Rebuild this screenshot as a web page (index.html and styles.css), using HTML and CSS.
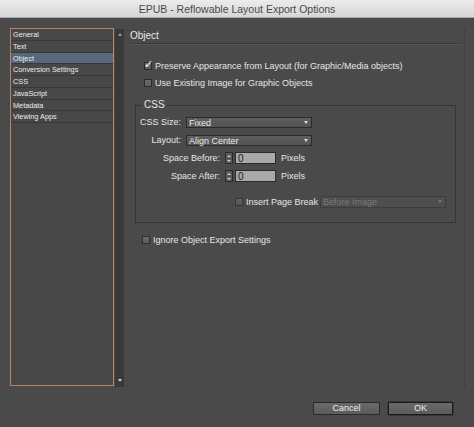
FILE: index.html
```html
<!DOCTYPE html>
<html>
<head>
<meta charset="utf-8">
<link rel="stylesheet" href="styles.css">
</head>
<body>
<div class="window">
  <div class="titlebar">EPUB - Reflowable Layout Export Options</div>
  <div class="main">
    <div class="sidebar">
      <ul class="list">
        <li>General</li>
        <li>Text</li>
        <li class="selected">Object</li>
        <li>Conversion Settings</li>
        <li>CSS</li>
        <li>JavaScript</li>
        <li>Metadata</li>
        <li>Viewing Apps</li>
      </ul>
      <div class="scrollbar">
        <span class="arrow up"></span>
        <span class="arrow down"></span>
      </div>
    </div>
    <div class="content">
      <div class="heading">Object</div>
      <div class="check-row first"><span class="checkbox checked"><span class="tick">✓</span></span><span>Preserve Appearance from Layout (for Graphic/Media objects)</span></div>
      <div class="check-row"><span class="checkbox"></span><span>Use Existing Image for Graphic Objects</span></div>
      <fieldset class="group">
        <legend>CSS</legend>
        <div class="row">
          <span class="label short">CSS Size:</span>
          <span class="select">Fixed<span class="caret"></span></span>
        </div>
        <div class="row">
          <span class="label short">Layout:</span>
          <span class="select">Align Center<span class="caret"></span></span>
        </div>
        <div class="row">
          <span class="label long">Space Before:</span>
          <span class="stepper"><span class="sa up"></span><span class="sa down"></span></span>
          <span class="input">0</span>
          <span class="unit">Pixels</span>
        </div>
        <div class="row">
          <span class="label long">Space After:</span>
          <span class="stepper"><span class="sa up"></span><span class="sa down"></span></span>
          <span class="input">0</span>
          <span class="unit">Pixels</span>
        </div>
        <div class="row pagebreak">
          <span class="checkbox disabled"></span>
          <span class="pb-label">Insert Page Break</span>
          <span class="select dim">Before Image<span class="caret"></span></span>
        </div>
      </fieldset>
      <div class="check-row ignore"><span class="checkbox"></span><span>Ignore Object Export Settings</span></div>
    </div>
  </div>
  <div class="footer">
    <button class="btn">Cancel</button>
    <button class="btn default">OK</button>
  </div>
</div>
</body>
</html>
```
FILE: styles.css
```css
* { box-sizing: border-box; }
html, body { margin: 0; padding: 0; }
body {
  width: 474px;
  height: 427px;
  background: #4a4a4a;
  font-family: "Liberation Sans", Arial, sans-serif;
  color: #e6e6e6;
  overflow: hidden;
}
.window { display: flex; flex-direction: column; height: 427px; }
.titlebar {
  height: 18px;
  line-height: 18px;
  text-align: center;
  font-size: 10.5px;
  color: #4a4a4a;
  background: linear-gradient(#ececec, #d6d6d6);
  border-bottom: 1px solid #a9a9a9;
}
.main { display: flex; padding: 10px 0 0 10px; align-items: flex-start; }
.sidebar { display: flex; }
.list {
  list-style: none;
  margin: 0;
  padding: 0;
  width: 104px;
  height: 358px;
  border: 1px solid #b88462;
  background: #474747;
  font-size: 7.3px;
}
.list li {
  height: 11.75px;
  line-height: 11px;
  padding-left: 2px;
  border-bottom: 1px solid #383838;
  color: #ececec;
}
.list li.selected { background: #57677d; }
.scrollbar {
  width: 9px;
  height: 358px;
  margin: 1px 0 0 1px;
  background: #393939;
  display: flex;
  flex-direction: column;
  justify-content: space-between;
  align-items: center;
  padding: 4px 0 5px;
}
.arrow { width: 0; height: 0; border-left: 2.5px solid transparent; border-right: 2.5px solid transparent; }
.arrow.up { border-bottom: 3px solid #9a9a9a; }
.arrow.down { border-top: 3px solid #d0d0d0; }
.content {
  margin-left: 6px;
  width: 335px;
  min-height: 359px;
  font-size: 9px;
  border-right: 1px solid #404040;
}
.heading {
  margin-top: 1px;
  margin-right: 2px;
  height: 15px;
  line-height: 14px;
  font-size: 10px;
  border-bottom: 1px solid #393939;
  box-shadow: 0 1px 0 #555;
}
.check-row { display: flex; align-items: center; height: 14px; margin-top: 3px; padding-left: 14px; gap: 3px; }
.check-row.first { margin-top: 15px; }
.checkbox {
  position: relative;
  width: 8px; height: 8px;
  border: 1px solid #2c2c2c;
  background: linear-gradient(#6c6c6c, #5a5a5a);
  flex: none;
}
.tick {
  position: absolute;
  left: -1px; top: -4px;
  font-size: 11px;
  line-height: 11px;
  font-family: "DejaVu Sans", sans-serif;
  color: #fff;
}
.checkbox.disabled { opacity: 0.7; }
.group {
  margin: 9px 8px 0 5px;
  padding: 4px 0 13px 0;
  border: 1px solid #343434;
}
.group legend { padding: 0 2px; margin-left: 6px; font-size: 10px; line-height: 12px; }
.row { display: flex; align-items: center; height: 14px; margin-bottom: 4px; }
.label { text-align: right; flex: none; }
.label.short { width: 45px; margin-right: 5px; }
.label.long { width: 84px; margin-right: 5px; }
.select {
  position: relative;
  width: 126px;
  height: 11px;
  line-height: 10px;
  padding-left: 2px;
  border: 1px solid #2b2b2b;
  background: linear-gradient(#5e5e5e, #535353);
  color: #ececec;
}
.caret {
  position: absolute; right: 3px; top: 3px;
  border-left: 2.5px solid transparent; border-right: 2.5px solid transparent;
  border-top: 3px solid #dcdcdc;
}
.select.dim { color: #7a7a7a; border-color: #3c3c3c; background: #4e4e4e; height: 12px; }
.select.dim .caret { border-top-color: #777; }
.stepper {
  width: 8px; height: 12px; flex: none;
  border: 1px solid #2b2b2b;
  background: #5a5a5a;
  display: flex; flex-direction: column; justify-content: space-around; align-items: center;
}
.sa { width: 0; height: 0; border-left: 2px solid transparent; border-right: 2px solid transparent; }
.sa.up { border-bottom: 2px solid #ccc; }
.sa.down { border-top: 2px solid #ccc; }
.input {
  margin-left: 2px;
  width: 41px; height: 12px;
  line-height: 11px;
  padding-left: 2px;
  border: 1px solid #2b2b2b;
  background: #a9a9a9;
  color: #1a1a1a;
  font-size: 10px;
}
.unit { margin-left: 5px; }
.row.pagebreak { margin: 12px 0 0 0; padding-left: 99px; }
.pb-label { margin-left: 3px; margin-right: 2px; }
.check-row.ignore { margin-top: 10px; padding-left: 12px; }
.footer { display: flex; justify-content: flex-end; gap: 8px; padding: 15px 21px 0 0; }
.btn {
  width: 67px; height: 13px;
  padding: 0;
  font-family: inherit;
  font-size: 9px;
  line-height: 11px;
  color: #ececec;
  background: linear-gradient(#6a6a6a, #5b5b5b);
  border: 1px solid #2a2a2a;
  border-radius: 1px;
}
.btn.default { width: 65px; border-color: #1c1c1c; box-shadow: 0 0 0 0.5px #222; }
```
